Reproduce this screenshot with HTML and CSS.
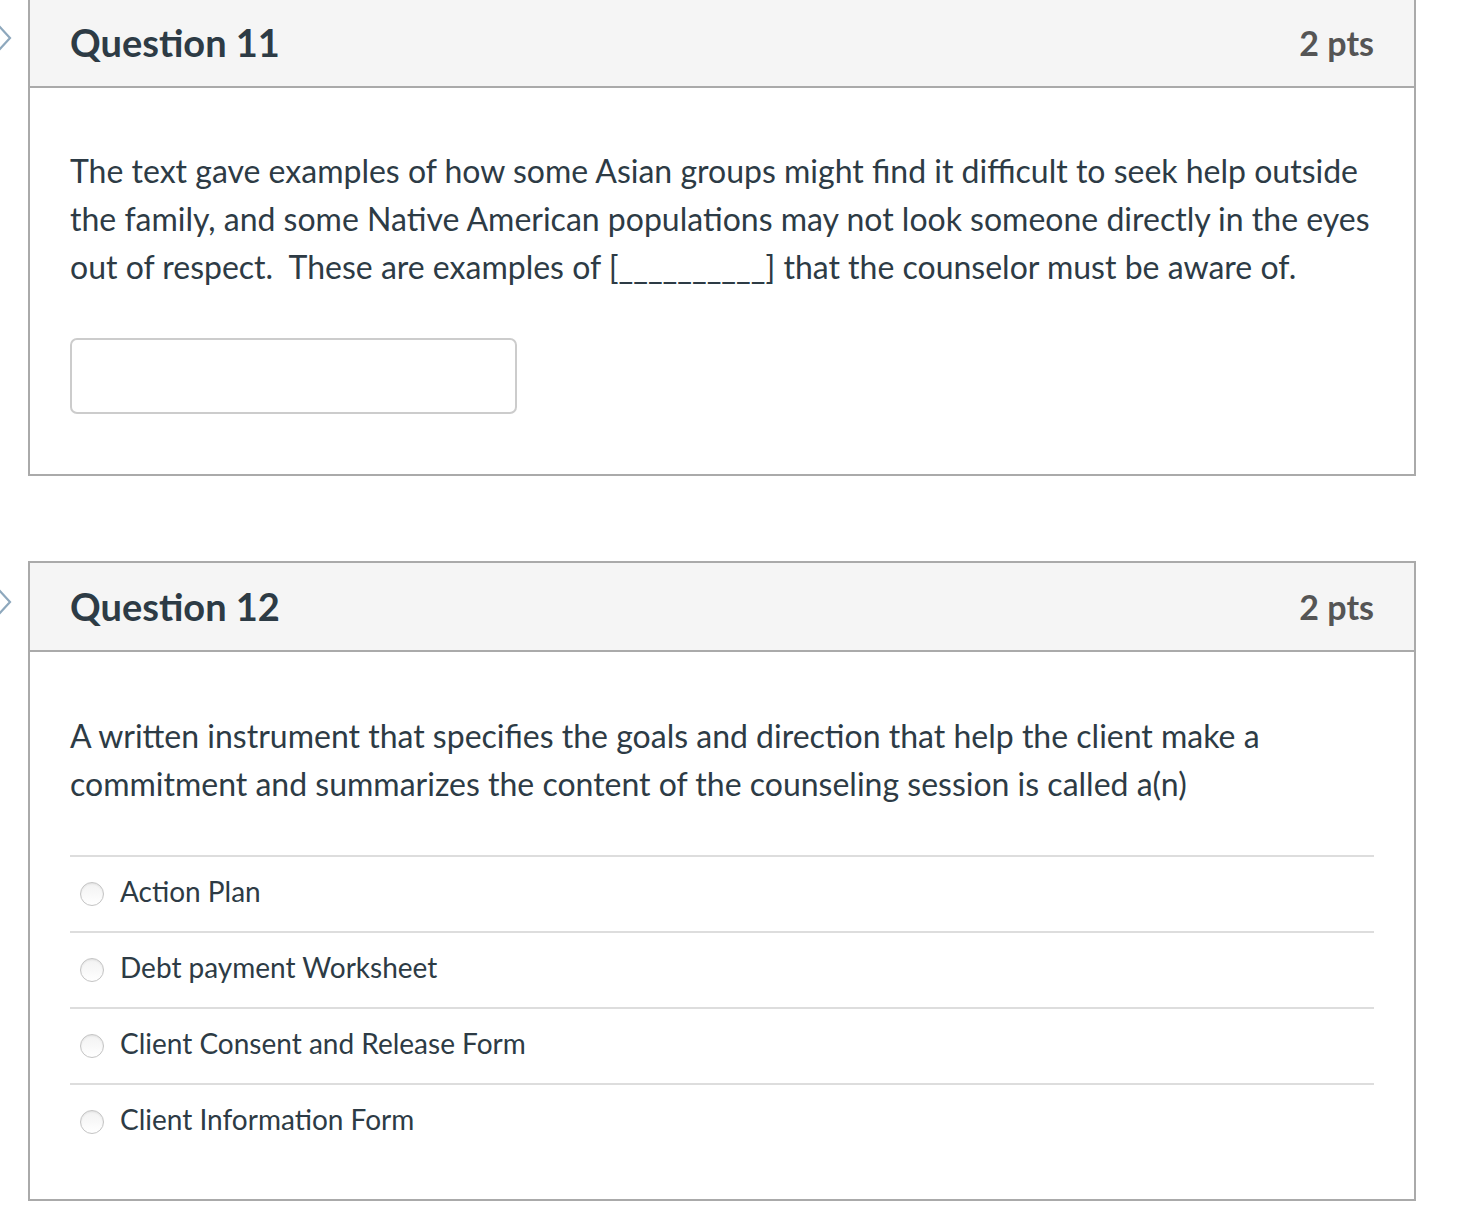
FILE: index.html
```html
<!DOCTYPE html>
<html>
<head>
<meta charset="utf-8">
<link rel="stylesheet" href="styles.css">
</head>
<body>
<div class="page">
  <div class="question q11">
    <svg class="chev" width="14" height="30" viewBox="0 0 14 30"><polyline points="-2,2 10,15 -2,28" fill="none" stroke="#8ea8bd" stroke-width="2.2"/></svg>
    <div class="qhead">
      <span class="qname">Question 11</span>
      <span class="qpts">2 pts</span>
    </div>
    <div class="qbody">
      <p class="qtext">The text gave examples of how some Asian groups might find it difficult to seek help outside the family, and some Native American populations may not look someone directly in the eyes out of respect.&nbsp; These are examples of [__________] that the counselor must be aware of.</p>
      <div class="input"></div>
    </div>
  </div>

  <div class="question q12">
    <svg class="chev" width="14" height="30" viewBox="0 0 14 30"><polyline points="-2,2 10,15 -2,28" fill="none" stroke="#8ea8bd" stroke-width="2.2"/></svg>
    <div class="qhead">
      <span class="qname">Question 12</span>
      <span class="qpts">2 pts</span>
    </div>
    <div class="qbody qbody-mc">
      <p class="qtext">A written instrument that specifies the goals and direction that help the client make a commitment and summarizes the content of the counseling session is called a(n)</p>
      <ul class="answers">
        <li class="answer"><span class="radio"></span><span>Action Plan</span></li>
        <li class="answer"><span class="radio"></span><span>Debt payment Worksheet</span></li>
        <li class="answer"><span class="radio"></span><span>Client Consent and Release Form</span></li>
        <li class="answer"><span class="radio"></span><span>Client Information Form</span></li>
      </ul>
    </div>
  </div>
</div>
</body>
</html>
```
FILE: styles.css
```css
html, body {
  margin: 0;
  padding: 0;
  background: #fff;
}
body {
  font-family: Lato, "Open Sans", sans-serif;
  color: #2d3b45;
  overflow: hidden;
}
.page {
  padding-left: 28px;
  width: 1388px;
  margin-top: -3px;
}
.question {
  position: relative;
  border: 2px solid #aaa;
  margin-bottom: 85px;
}
.chev {
  position: absolute;
  left: -30px;
  top: 24px;
}
.qhead {
  background: #f5f5f5;
  border-bottom: 2px solid #aaa;
  height: 87px;
  display: flex;
  align-items: center;
  justify-content: space-between;
  padding: 0 40px;
}
.qname {
  font-weight: 700;
  font-size: 38px;
  color: #2d3b45;
  position: relative;
  top: -1px;
}
.qpts {
  font-weight: 700;
  font-size: 34px;
  color: #555;
}
.qbody {
  padding: 59px 40px 60px;
}
.qtext {
  margin: 0;
  font-size: 32px;
  line-height: 48px;
}
.input {
  margin-top: 47px;
  width: 443px;
  height: 72px;
  border: 2px solid #ccc;
  border-radius: 7px;
}
.qbody-mc {
  padding-top: 60px;
  padding-bottom: 40px;
}
.answers {
  list-style: none;
  margin: 47px 0 0;
  padding: 0;
}
.answer {
  border-top: 2px solid #ddd;
  height: 74px;
  display: flex;
  align-items: center;
  font-size: 28px;
}
.answer span:last-child {
  position: relative;
  top: -3px;
}
.radio {
  width: 22px;
  height: 22px;
  border: 1px solid #c4c4c4;
  border-radius: 50%;
  background: linear-gradient(#f2f2f2, #fff);
  box-shadow: inset 0 1px 2px rgba(0,0,0,0.08);
  margin: 0 16px 0 10px;
  flex: none;
}
```
